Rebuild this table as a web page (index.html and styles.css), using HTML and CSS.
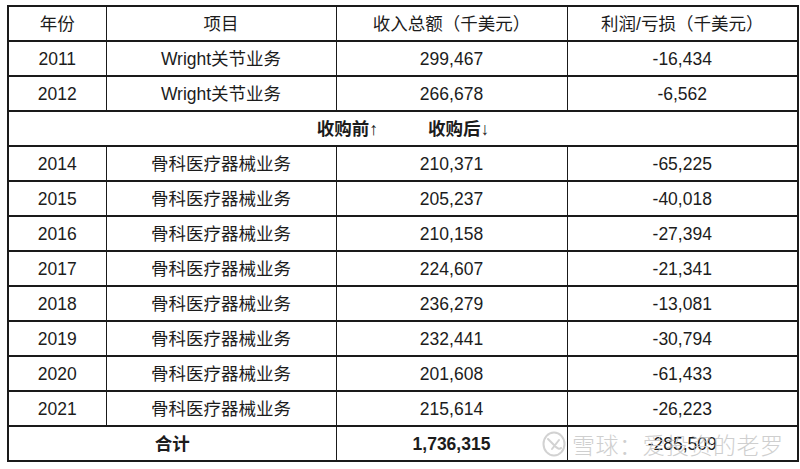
FILE: index.html
```html
<!DOCTYPE html>
<html lang="zh-CN">
<head>
<meta charset="utf-8">
<link rel="stylesheet" href="styles.css">
</head>
<body>
<div class="page">
<table class="data">
  <colgroup>
    <col class="c1"><col class="c2"><col class="c3"><col class="c4">
  </colgroup>
  <tr><td>年份</td><td>项目</td><td>收入总额（千美元）</td><td>利润/亏损（千美元）</td></tr>
  <tr><td>2011</td><td>Wright关节业务</td><td>299,467</td><td>-16,434</td></tr>
  <tr><td>2012</td><td>Wright关节业务</td><td>266,678</td><td>-6,562</td></tr>
  <tr><td colspan="4" class="bold"><span class="split">收购前↑</span><span class="split">收购后↓</span></td></tr>
  <tr><td>2014</td><td>骨科医疗器械业务</td><td>210,371</td><td>-65,225</td></tr>
  <tr><td>2015</td><td>骨科医疗器械业务</td><td>205,237</td><td>-40,018</td></tr>
  <tr><td>2016</td><td>骨科医疗器械业务</td><td>210,158</td><td>-27,394</td></tr>
  <tr><td>2017</td><td>骨科医疗器械业务</td><td>224,607</td><td>-21,341</td></tr>
  <tr><td>2018</td><td>骨科医疗器械业务</td><td>236,279</td><td>-13,081</td></tr>
  <tr><td>2019</td><td>骨科医疗器械业务</td><td>232,441</td><td>-30,794</td></tr>
  <tr><td>2020</td><td>骨科医疗器械业务</td><td>201,608</td><td>-61,433</td></tr>
  <tr><td>2021</td><td>骨科医疗器械业务</td><td>215,614</td><td>-26,223</td></tr>
  <tr><td colspan="2" class="bold">合计</td><td class="bold">1,736,315</td><td class="over">-285,509</td></tr>
</table>
<div class="watermark">
  <svg class="wm-logo" width="24" height="26" viewBox="0 0 24 26">
    <ellipse cx="12" cy="13" rx="10.5" ry="11.5" fill="none" stroke="#c8c8c8" stroke-width="2"/>
    <path d="M6 8 L14 16 M10 18 L17 9 M14 16 Q17 19 19 17" fill="none" stroke="#c8c8c8" stroke-width="2" stroke-linecap="round"/>
  </svg>
  <span class="wm-text">雪球：爱投资的老罗</span>
</div>
</div>
</body>
</html>
```
FILE: styles.css
```css
html, body {
  margin: 0;
  padding: 0;
  background: #fff;
}
.page {
  position: relative;
  width: 800px;
  height: 469px;
  padding: 5px 0 0 7px;
  box-sizing: border-box;
}
.data {
  border-collapse: collapse;
  table-layout: fixed;
  width: 790px;
  font-family: "Liberation Sans", "Noto Sans CJK SC", sans-serif;
  font-size: 17.5px;
  color: #1c1c1c;
}
.c1 { width: 98px; }
.c2 { width: 230px; }
.c3 { width: 231px; }
.c4 { width: 231px; }
.data td {
  height: 33px;
  padding: 0;
  text-align: center;
  vertical-align: middle;
  border: 2px solid #1a1a1a;
  border-left-width: 1.5px;
  border-right-width: 1.5px;
  line-height: 20px;
  white-space: nowrap;
}
.data tr td:first-child { border-left-width: 2px; }
.data tr td:last-child { border-right-width: 2px; }
.bold { font-weight: bold; }
.split { display: inline-block; margin: 0 25px; }
.watermark {
  position: absolute;
  left: 542px;
  top: 430px;
  display: flex;
  align-items: center;
  gap: 6px;
  opacity: 0.8;
  pointer-events: none;
}
.wm-text {
  font-family: "Noto Sans CJK SC", sans-serif;
  font-size: 23px;
  font-weight: 300;
  line-height: 28px;
  color: #c4c4c4;
  letter-spacing: 0.5px;
}
```
